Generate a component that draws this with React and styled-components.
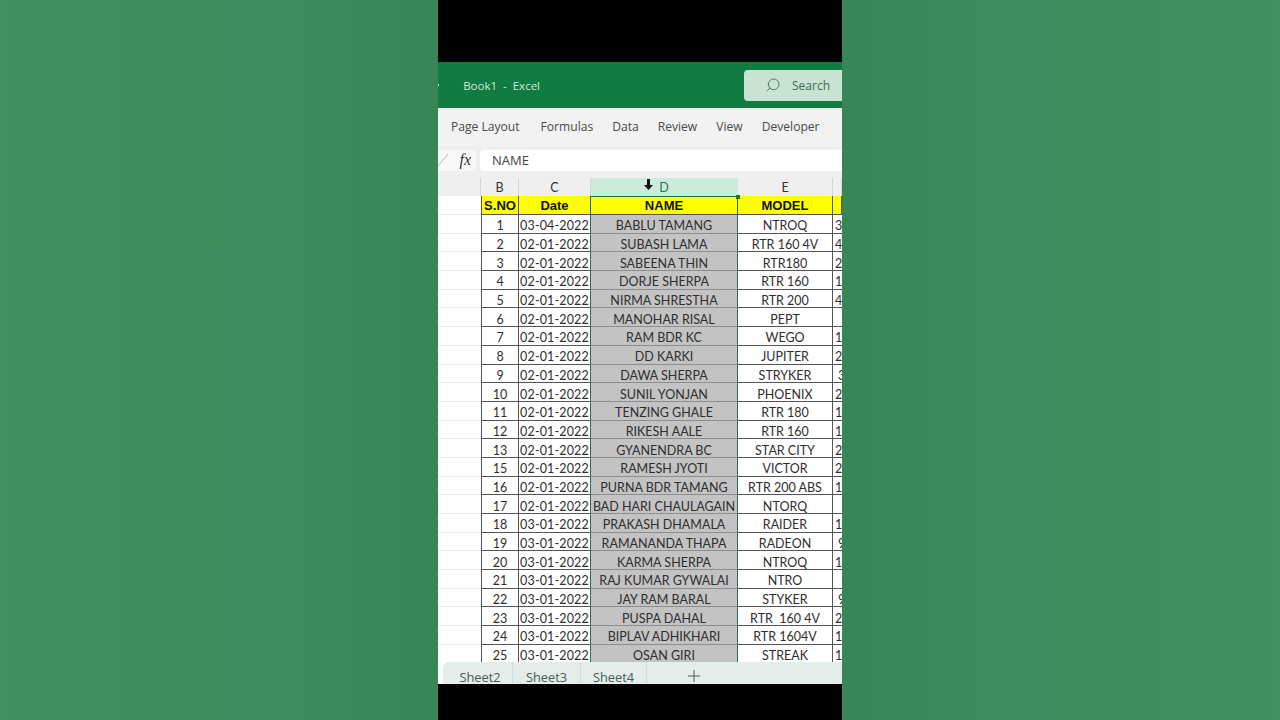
import React from 'react'
import styled, { createGlobalStyle } from 'styled-components'
import { Search } from 'lucide-react'

const rows = [
  [1, '03-04-2022', 'BABLU TAMANG', 'NTROQ', '3'],
  [2, '02-01-2022', 'SUBASH LAMA', 'RTR 160 4V', '4'],
  [3, '02-01-2022', 'SABEENA THIN', 'RTR180', '2'],
  [4, '02-01-2022', 'DORJE SHERPA', 'RTR 160', '1'],
  [5, '02-01-2022', 'NIRMA SHRESTHA', 'RTR 200', '4'],
  [6, '02-01-2022', 'MANOHAR RISAL', 'PEPT', ''],
  [7, '02-01-2022', 'RAM BDR KC', 'WEGO', '1'],
  [8, '02-01-2022', 'DD KARKI', 'JUPITER', '2'],
  [9, '02-01-2022', 'DAWA SHERPA', 'STRYKER', '3'],
  [10, '02-01-2022', 'SUNIL YONJAN', 'PHOENIX', '2'],
  [11, '02-01-2022', 'TENZING GHALE', 'RTR 180', '1'],
  [12, '02-01-2022', 'RIKESH AALE', 'RTR 160', '1'],
  [13, '02-01-2022', 'GYANENDRA BC', 'STAR CITY', '2'],
  [15, '02-01-2022', 'RAMESH JYOTI', 'VICTOR', '2'],
  [16, '02-01-2022', 'PURNA BDR TAMANG', 'RTR 200 ABS', '1'],
  [17, '02-01-2022', 'BAD HARI CHAULAGAIN', 'NTORQ', ''],
  [18, '03-01-2022', 'PRAKASH DHAMALA', 'RAIDER', '1'],
  [19, '03-01-2022', 'RAMANANDA THAPA', 'RADEON', '9'],
  [20, '03-01-2022', 'KARMA SHERPA', 'NTROQ', '1'],
  [21, '03-01-2022', 'RAJ KUMAR GYWALAI', 'NTRO', ''],
  [22, '03-01-2022', 'JAY RAM BARAL', 'STYKER', '9'],
  [23, '03-01-2022', 'PUSPA DAHAL', 'RTR  160 4V', '2'],
  [24, '03-01-2022', 'BIPLAV ADHIKHARI', 'RTR 1604V', '1'],
  [25, '03-01-2022', 'OSAN GIRI', 'STREAK', '1'],
]

const GlobalStyle = createGlobalStyle`
  html, body { margin: 0; padding: 0; background: #000; }
  #root { width: 1280px; height: 720px; overflow: hidden; }
`

const Stage = styled.div`
  display: grid;
  grid-template-columns: 438px 404px 438px;
  width: 1280px;
  height: 720px;
`

const Side = styled.div`
  background: linear-gradient(
    ${p => (p.$right ? '270deg' : '90deg')},
    #41905f 0%, #3e8c5d 60%, #388558 100%
  );
`

const Phone = styled.div`
  background: #000;
  padding: 62px 0 36px;
  display: flex;
  flex-direction: column;
  overflow: hidden;
`

const TitleBar = styled.div`
  height: 46px;
  flex: none;
  background: #107c41;
  display: flex;
  align-items: center;
  color: #d3e8da;
  font: 11.5px 'Open Sans', sans-serif;
  white-space: pre;
`

const Tick = styled.span`
  width: 2px;
  height: 2px;
  margin-right: 24px;
  background: #cfe6d8;
`

const SearchBox = styled.div`
  margin-left: 204px;
  width: 98px;
  height: 31px;
  flex: none;
  box-sizing: border-box;
  background: #c8e2d3;
  border-radius: 4px 0 0 4px;
  display: flex;
  align-items: center;
  gap: 11px;
  padding-left: 21px;
  color: #3c6d54;
  font-size: 12px;
  svg { transform: scaleX(-1); }
`

const Tabs = styled.div`
  height: 38px;
  flex: none;
  box-sizing: border-box;
  padding: 0 0 2px 13px;
  background: #f1f2f1;
  display: flex;
  align-items: center;
  gap: 19px;
  color: #4a4a4a;
  font: 12.1px 'Open Sans', sans-serif;
  white-space: nowrap;
  span:first-child { margin-right: 2px; }
`

const FormulaRow = styled.div`
  height: 32px;
  flex: none;
  background: #eef0ef;
  display: flex;
  align-items: center;
  box-sizing: border-box;
  padding: 0 0 4px;
`

const FxBox = styled.div`
  width: 38px;
  height: 21px;
  flex: none;
  display: flex;
  align-items: center;
  justify-content: space-between;
  padding-right: 5px;
  box-sizing: border-box;
  background: #f8f8f8;
  border-radius: 0 4px 4px 0;
  color: #333;
  font: italic 16px 'Liberation Serif', serif;
`

const Formula = styled.div`
  flex: 1;
  height: 21px;
  margin-left: 4px;
  padding-left: 12px;
  background: #fff;
  border-radius: 4px 0 0 4px;
  color: #444;
  font: 13px/21px 'Open Sans', sans-serif;
`

const Sheet = styled.div`
  flex: 1;
  min-height: 0;
  overflow: hidden;
  background: #fff;
  display: grid;
  grid-template-columns: 43px 38px 72px 147px 95px 9px;
  grid-template-rows: 18px 19px;
  grid-auto-rows: 18.7px;
  font: 12.5px 'Lato', sans-serif;
  color: #2e2e2e;
`

const ColHead = styled.div`
  background: ${p => (p.$active ? '#cdebdb' : '#efefef')};
  color: ${p => (p.$active ? '#1c7a4a' : '#333')};
  border-right: 1px solid ${p => (p.$active ? '#cdebdb' : '#d6d6d6')};
  box-sizing: border-box;
  display: flex;
  align-items: center;
  justify-content: center;
  font-size: 12.5px;
  position: relative;
`

const SortArrow = styled.svg`
  position: absolute;
  left: 53px;
  top: 1px;
`

const Gutter = styled.div`
  background: #fff;
  border-bottom: 1px solid #e8e8e8;
  box-sizing: border-box;
`

const Cell = styled.div`
  box-sizing: border-box;
  padding-top: 4px;
  display: flex;
  align-items: center;
  justify-content: center;
  white-space: pre;
  overflow: hidden;
  border-right: 1px solid ${p => (p.$name ? '#2d6b52' : '#555')};
  border-bottom: 1px solid #555;
  background: ${p => (p.$name ? '#c3c3c3' : '#fff')};
`

const LeftCell = styled(Cell)`
  border-left: 1px solid #555;
`

const NameCell = styled(Cell)`
  border-left: 1px solid #2d6b52;
  margin-left: -1px;
  border-bottom-color: #8d8d8d;
`

const DateCell = styled(Cell)`
  letter-spacing: 0.15px;
`

const Overflow = styled(Cell)`
  border-right: 0;
  justify-content: flex-start;
  padding-left: ${p => (p.$indent ? '5px' : '2px')};
`

const HeadCell = styled.div`
  box-sizing: border-box;
  background: #ffff00;
  display: flex;
  align-items: center;
  justify-content: center;
  color: #111;
  font: bold 13px 'Liberation Sans', sans-serif;
  white-space: nowrap;
  border-right: 1px solid #555;
  border-bottom: 1px solid #555;
  position: relative;
`

const SnoHead = styled(HeadCell)`
  border-left: 1px solid #555;
`

const NameHead = styled(HeadCell)`
  border: 1.5px solid #1d6f42;
  border-bottom-color: #555;
  margin-left: -1px;
`

const Handle = styled.span`
  position: absolute;
  right: -3px;
  top: -2px;
  width: 4px;
  height: 4px;
  background: #1d6f42;
  z-index: 1;
`

const Footer = styled.div`
  height: 22px;
  flex: none;
  background: #fbfdfc;
  padding-left: 5px;
`

const SheetBar = styled.div`
  height: 100%;
  box-sizing: border-box;
  padding-left: 5px;
  background: #e4edea;
  border-radius: 6px 0 0 0;
  display: flex;
  align-items: flex-end;
  color: #4d5a55;
  font: 12.8px 'Open Sans', sans-serif;
`

const SheetTab = styled.div`
  width: ${p => p.$w}px;
  height: 22px;
  flex: none;
  box-sizing: border-box;
  border-right: 1px solid #d2dcd8;
  text-align: center;
  line-height: 30px;
  overflow: hidden;
`

const AddSheet = styled.svg`
  margin: 0 0 2px 41px;
`

function App() {
  return (
    <>
      <GlobalStyle />
      <Stage>
        <Side />
        <Phone>
          <TitleBar>
            <Tick />
            {'Book1  -  Excel'}
            <SearchBox>
              <Search size={16} strokeWidth={1.3} />
              Search
            </SearchBox>
          </TitleBar>
          <Tabs>
            <span>Page Layout</span>
            <span>Formulas</span>
            <span>Data</span>
            <span>Review</span>
            <span>View</span>
            <span>Developer</span>
          </Tabs>
          <FormulaRow>
            <FxBox>
              <svg width="11" height="14" viewBox="0 0 11 14">
                <path d="M10 1 0 13" stroke="#b5b5b5" strokeWidth="1" fill="none" />
              </svg>
              fx
            </FxBox>
            <Formula>NAME</Formula>
          </FormulaRow>
          <Sheet>
            <ColHead />
            <ColHead>B</ColHead>
            <ColHead>C</ColHead>
            <ColHead $active>
              <SortArrow width="9" height="12" viewBox="0 0 9 12">
                <path d="M3 0h3v6h3L4.5 11 0 6h3z" fill="#111" />
              </SortArrow>
              D
            </ColHead>
            <ColHead>E</ColHead>
            <ColHead />

            <Gutter />
            <SnoHead>S.NO</SnoHead>
            <HeadCell>Date</HeadCell>
            <NameHead>
              NAME
              <Handle />
            </NameHead>
            <HeadCell>MODEL</HeadCell>
            <HeadCell />

            {rows.map(([sno, date, name, model, extra]) => (
              <React.Fragment key={sno}>
                <Gutter />
                <LeftCell>{sno}</LeftCell>
                <DateCell>{date}</DateCell>
                <NameCell $name>{name}</NameCell>
                <Cell>{model}</Cell>
                <Overflow $indent={sno === 9 || sno === 19 || sno === 22}>{extra}</Overflow>
              </React.Fragment>
            ))}
          </Sheet>
          <Footer>
            <SheetBar>
              <SheetTab $w={65}>Sheet2</SheetTab>
              <SheetTab $w={68}>Sheet3</SheetTab>
              <SheetTab $w={66}>Sheet4</SheetTab>
              <AddSheet width="12" height="12" viewBox="0 0 12 12">
                <path d="M6 0v12M0 6h12" stroke="#555" strokeWidth="1" />
              </AddSheet>
            </SheetBar>
          </Footer>
        </Phone>
        <Side $right />
      </Stage>
    </>
  )
}

export default App
